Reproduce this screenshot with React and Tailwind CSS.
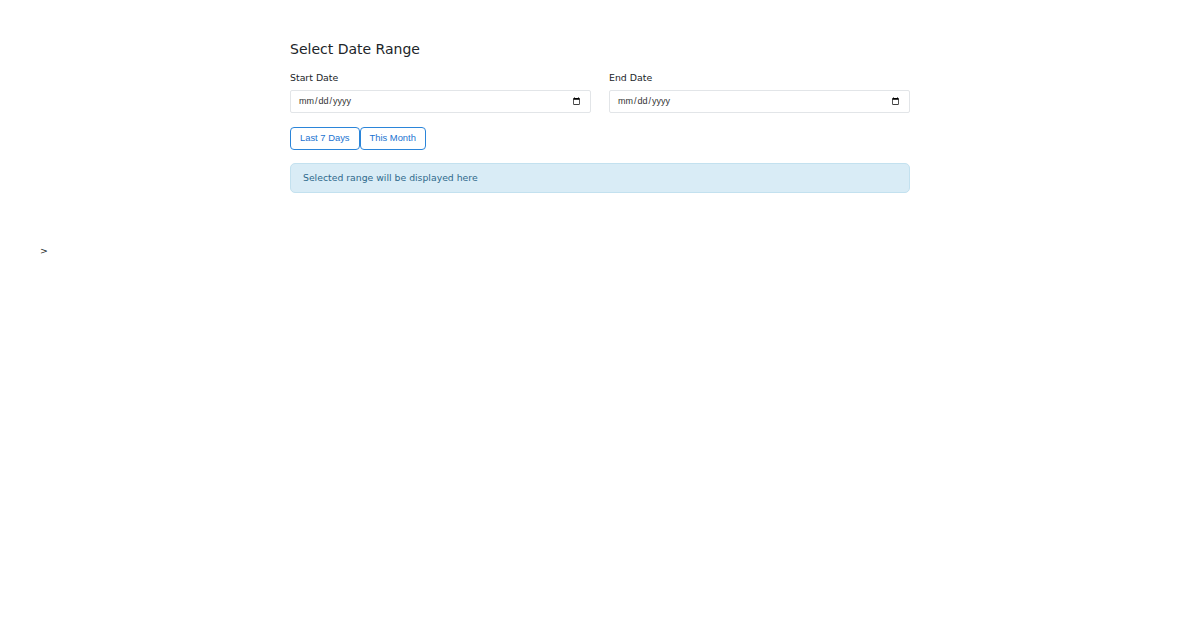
import React, { useState } from 'react';

const App = () => {
  const [start, setStart] = useState('');
  const [end, setEnd] = useState('');

  return (
    <div className="min-h-[630px] bg-white text-[#212529]" style={{ fontFamily: '"DejaVu Sans", sans-serif' }}>
      {/* date range picker */}
      <div className="w-[620px] mx-auto pt-[39px]">
        <h2 className="text-[14px] leading-[20px] mb-[12px]">Select Date Range</h2>

        <div className="grid grid-cols-2 gap-[18px]">
          <div className="flex flex-col">
            <label className="text-[9.4px] leading-[14px] mb-[5px]">Start Date</label>
            <input
              type="date"
              value={start}
              onChange={(e) => setStart(e.target.value)}
              className="h-[23px] border border-[#e2e5e8] rounded-[2px] px-[7px] text-[9px] text-[#333] bg-white"
              style={{ fontFamily: '"Liberation Sans", Arial, sans-serif' }}
            />
          </div>
          <div className="flex flex-col">
            <label className="text-[9.4px] leading-[14px] mb-[5px]">End Date</label>
            <input
              type="date"
              value={end}
              onChange={(e) => setEnd(e.target.value)}
              className="h-[23px] border border-[#e2e5e8] rounded-[2px] px-[7px] text-[9px] text-[#333] bg-white"
              style={{ fontFamily: '"Liberation Sans", Arial, sans-serif' }}
            />
          </div>
        </div>

        <div className="flex mt-[14px]" style={{ fontFamily: '"Liberation Sans", Arial, sans-serif' }}>
          <button className="h-[23px] px-[9px] border border-[#2b85d9] rounded-[4px] text-[9.4px] text-[#1a73d1] bg-white">
            Last 7 Days
          </button>
          <button className="h-[23px] px-[9px] border border-[#2b85d9] rounded-[4px] text-[9.4px] text-[#1a73d1] bg-white">
            This Month
          </button>
        </div>

        <div className="mt-[13px] h-[30px] flex items-center px-[12px] bg-[#d9ecf6] border border-[#c3e1ef] rounded-[5px] text-[9.3px] text-[#2f6a8c]">
          Selected range will be displayed here
        </div>
      </div>

      <div className="pl-[40px] mt-[51px] text-[9.4px] leading-[14px]">&gt;</div>
    </div>
  );
};

export default App;
